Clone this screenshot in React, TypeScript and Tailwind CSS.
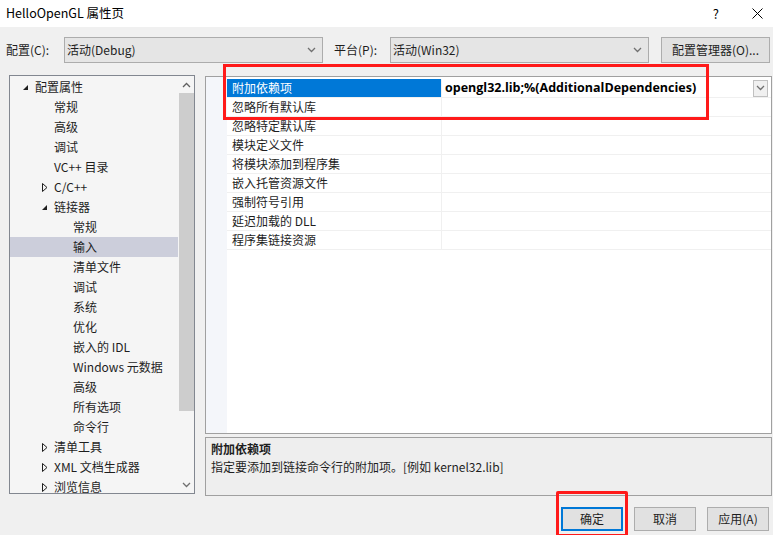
import React from "react";

const font = { fontFamily: '"Noto Sans CJK SC", "Noto Sans", sans-serif' };

interface TreeItem {
  label: string;
  level: number;
  arrow?: "open" | "closed";
  selected?: boolean;
}

const tree: TreeItem[] = [
  { label: "配置属性", level: 0, arrow: "open" },
  { label: "常规", level: 1 },
  { label: "高级", level: 1 },
  { label: "调试", level: 1 },
  { label: "VC++ 目录", level: 1 },
  { label: "C/C++", level: 1, arrow: "closed" },
  { label: "链接器", level: 1, arrow: "open" },
  { label: "常规", level: 2 },
  { label: "输入", level: 2, selected: true },
  { label: "清单文件", level: 2 },
  { label: "调试", level: 2 },
  { label: "系统", level: 2 },
  { label: "优化", level: 2 },
  { label: "嵌入的 IDL", level: 2 },
  { label: "Windows 元数据", level: 2 },
  { label: "高级", level: 2 },
  { label: "所有选项", level: 2 },
  { label: "命令行", level: 2 },
  { label: "清单工具", level: 1, arrow: "closed" },
  { label: "XML 文档生成器", level: 1, arrow: "closed" },
  { label: "浏览信息", level: 1, arrow: "closed" },
];

const props = [
  "附加依赖项",
  "忽略所有默认库",
  "忽略特定默认库",
  "模块定义文件",
  "将模块添加到程序集",
  "嵌入托管资源文件",
  "强制符号引用",
  "延迟加载的 DLL",
  "程序集链接资源",
];

function Chevron({ up = false }: { up?: boolean }) {
  return (
    <svg width="9" height="6" viewBox="0 0 9 6">
      <path
        d={up ? "M1 5 L4.5 1.5 L8 5" : "M1 1 L4.5 4.5 L8 1"}
        fill="none"
        stroke={up ? "#606060" : "#707070"}
        strokeWidth="1.3"
      />
    </svg>
  );
}

function Arrow({ kind }: { kind: "open" | "closed" }) {
  if (kind === "open") {
    return (
      <svg width="7" height="7" viewBox="0 0 7 7">
        <path d="M6 1 L6 6 L1 6 Z" fill="#1e1e1e" />
      </svg>
    );
  }
  return (
    <svg width="6" height="9" viewBox="0 0 6 9">
      <path d="M0.5 0.5 L5 4.5 L0.5 8.5 Z" fill="none" stroke="#1e1e1e" strokeWidth="1" />
    </svg>
  );
}

function Combo({ text, width }: { text: string; width: string }) {
  return (
    <div className={`${width} h-[26px] bg-[#e5e5e5] border border-[#acacac] flex items-center justify-between pl-[2px] pr-[6px]`}>
      <span>{text}</span>
      <Chevron />
    </div>
  );
}

function Button({ label, focused = false }: { label: string; focused?: boolean }) {
  return (
    <div
      className={
        focused
          ? "w-[62px] h-[24px] bg-[#e1e1e1] border-2 border-[#0078d7] flex items-center justify-center"
          : "w-[62px] h-[24px] bg-[#e1e1e1] border border-[#adadad] flex items-center justify-center"
      }
    >
      {label}
    </div>
  );
}

export default function App() {
  return (
    <div style={font} className="relative w-[773px] h-[535px] bg-[#f0f0f0] text-[12px] text-[#1e1e1e] overflow-hidden flex flex-col">
      {/* title bar */}
      <div className="h-[27px] bg-white flex items-center pl-[6px] shrink-0">
        <span className="text-[12.5px] text-black">HelloOpenGL 属性页</span>
        <span className="ml-auto mr-[33px] text-[13px] text-black">?</span>
        <svg width="11" height="11" viewBox="0 0 11 11" className="mr-[10px]">
          <path d="M0.5 0.5 L10.5 10.5 M10.5 0.5 L0.5 10.5" stroke="#000" strokeWidth="1" />
        </svg>
      </div>

      {/* config row */}
      <div className="h-[48px] shrink-0 flex items-start pt-[10px] pl-[6px]">
        <span className="w-[58px] h-[26px] flex items-center">配置(C):</span>
        <Combo text="活动(Debug)" width="w-[259px]" />
        <span className="w-[67px] h-[26px] flex items-center pl-[11px]">平台(P):</span>
        <Combo text="活动(Win32)" width="w-[259px]" />
        <div className="ml-[12px] w-[109px] h-[26px] bg-[#e1e1e1] border border-[#adadad] flex items-center justify-center">
          配置管理器(O)...
        </div>
      </div>

      {/* main */}
      <div className="flex pl-[9px]">
        {/* tree */}
        <div className="w-[186px] h-[419px] border border-[#828790] bg-[#f5f5f5] flex">
          <div className="flex-1 overflow-hidden pt-[1px]">
            {tree.map((t, i) => (
              <div
                key={i}
                className={t.selected ? "h-[20px] flex items-center bg-[#cccedb]" : "h-[20px] flex items-center"}
              >
                <span
                  className={
                    t.level === 0
                      ? "w-[25px] flex justify-end pr-[6px]"
                      : t.level === 1
                      ? "w-[44px] flex justify-end pr-[6px]"
                      : "w-[63px] flex justify-end pr-[6px]"
                  }
                >
                  {t.arrow && <Arrow kind={t.arrow} />}
                </span>
                <span className="whitespace-nowrap">{t.label}</span>
              </div>
            ))}
          </div>
          <div className="w-[16px] flex flex-col items-center">
            <div className="h-[17px] flex items-center justify-center">
              <Chevron up />
            </div>
            <div className="w-[15px] h-[318px] bg-[#cdcdcd]" />
            <div className="flex-1" />
            <div className="h-[17px] flex items-center justify-center">
              <Chevron />
            </div>
          </div>
        </div>

        {/* right side */}
        <div className="ml-[10px] w-[567px] flex flex-col">
          {/* property grid */}
          <div className="h-[358px] border border-[#a0a0a0] bg-white flex mt-[1px]">
            <div className="w-[21px] bg-[#f4f6fa]" />
            <div className="flex-1 pt-[2px]">
              {props.map((p, i) => (
                <div key={i} className="h-[19px] flex border-b border-[#f0f0f0]">
                  <div
                    className={
                      i === 0
                        ? "w-[214px] bg-[#0078d7] text-white pl-[5px] flex items-center"
                        : "w-[214px] pl-[5px] flex items-center"
                    }
                  >
                    {p}
                  </div>
                  <div className="flex-1 border-l border-[#f0f0f0] flex items-center pl-[3px] pr-[3px]">
                    {i === 0 && (
                      <>
                        <span className="font-bold text-[12.5px] text-black" style={{ fontFamily: '"Open Sans", sans-serif' }}>
                          opengl32.lib;%(AdditionalDependencies)
                        </span>
                        <div className="ml-auto w-[15px] h-[17px] bg-[#f0f0f0] border border-[#c0c0c0] flex items-center justify-center">
                          <Chevron />
                        </div>
                      </>
                    )}
                  </div>
                </div>
              ))}
            </div>
          </div>

          {/* description */}
          <div className="mt-[3px] h-[59px] border border-[#a0a0a0] bg-[#eeeeee] pl-[5px] pt-[2px]">
            <div className="font-bold leading-[18px]">附加依赖项</div>
            <div className="leading-[18px]">指定要添加到链接命令行的附加项。[例如 kernel32.lib]</div>
          </div>

          {/* buttons */}
          <div className="mt-[11px] flex justify-end gap-[11px] pr-[3px]">
            <Button label="确定" focused />
            <Button label="取消" />
            <Button label="应用(A)" />
          </div>
        </div>
      </div>

      {/* annotation boxes */}
      <div className="absolute left-[223px] top-[64px] w-[486px] h-[56px] border-[3px] border-[#ff1a1a]" />
      <div className="absolute left-[556px] top-[491px] w-[72px] h-[46px] border-[3px] border-[#ff1a1a] rounded-[2px]" />
    </div>
  );
}
